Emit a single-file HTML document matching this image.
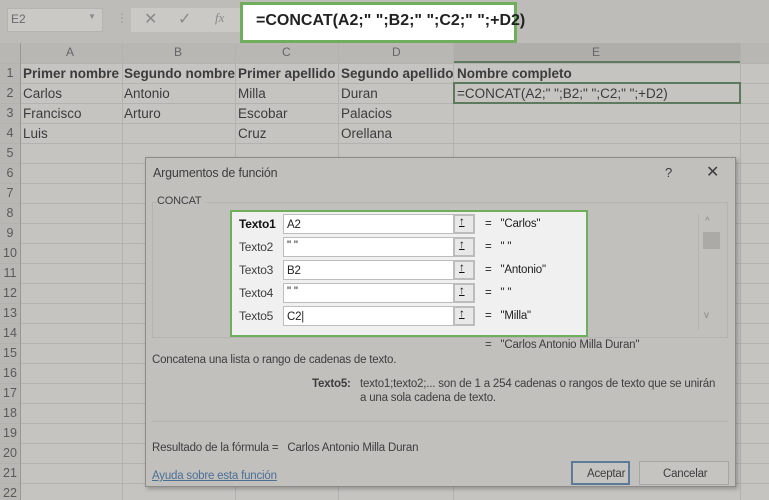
<!DOCTYPE html>
<html><head><meta charset="utf-8"><style>
*{margin:0;padding:0;box-sizing:border-box}
body{width:769px;height:500px;overflow:hidden;background:#c6c4c1;font-family:"Liberation Sans",sans-serif;color:#3c3c3c;position:relative}
.a{position:absolute}
.top{left:0;top:0;width:769px;height:43px;background:#bebcb9}
.grid{left:0;top:43px;width:769px;height:457px}
.hl{position:absolute;left:0;width:769px;height:1px;background:#b4b2af}
.vl{position:absolute;top:0;width:1px;height:457px;background:#b4b2af}
.t{position:absolute;font-size:13.5px;white-space:nowrap}
.rh{position:absolute;left:0;width:20px;text-align:center;font-size:12.5px;color:#5a5a5a}
.dlg{left:145px;top:157px;width:591px;height:330px;background:#c2c0bd;border:1px solid #8e8c89;box-shadow:2px 2px 4px rgba(0,0,0,.25)}
.dt{font-size:11.5px;color:#3e3e3e;position:absolute;white-space:nowrap;letter-spacing:-0.2px}
</style></head><body>
<div class="a top">
 <div class="a" style="left:7px;top:8px;width:96px;height:24px;background:#cbc9c6;border:1px solid #b6b4b1"></div>
 <div class="t" style="left:11px;top:12px;color:#6b6b6b;font-size:12px">E2</div>
 <div class="t" style="left:88px;top:12px;color:#8a8a8a;font-size:8px">▼</div>
 <div class="t" style="left:116px;top:11px;color:#9a9a9a;font-size:12px">⋮</div>
 <div class="a" style="left:131px;top:8px;width:112px;height:24px;background:#cbc9c6"></div>
 <div class="t" style="left:144px;top:9px;color:#8a8a8a;font-size:16px">✕</div>
 <div class="t" style="left:178px;top:9px;color:#8a8a8a;font-size:16px">✓</div>
 <div class="t" style="left:215px;top:10px;color:#8a8a8a;font-size:13px;font-style:italic;font-family:'Liberation Serif',serif">fx</div>
 <div class="a" style="left:240px;top:2px;width:277px;height:41px;background:#fff;border:3px solid #6fae5c"></div>
 <div class="t" style="left:256px;top:12px;font-size:16px;font-weight:bold;color:#222">=CONCAT(A2;" ";B2;" ";C2;" ";+D2)</div>
</div>
<div class="a grid">
 <div class="a" style="left:0;top:0;width:769px;height:20px;background:#b9b7b4"></div>
 <div class="a" style="left:0;top:0;width:20px;height:457px;background:#b9b7b4"></div>
 <div class="a" style="left:453px;top:0;width:287px;height:20px;background:#b0aeab;border-bottom:2px solid #5e7a5e"></div>
 <div class="hl" style="top:20px"></div><div class="hl" style="top:40px"></div><div class="hl" style="top:60px"></div><div class="hl" style="top:80px"></div><div class="hl" style="top:100px"></div><div class="hl" style="top:120px"></div><div class="hl" style="top:140px"></div><div class="hl" style="top:160px"></div><div class="hl" style="top:180px"></div><div class="hl" style="top:200px"></div><div class="hl" style="top:220px"></div><div class="hl" style="top:240px"></div><div class="hl" style="top:260px"></div><div class="hl" style="top:280px"></div><div class="hl" style="top:300px"></div><div class="hl" style="top:320px"></div><div class="hl" style="top:340px"></div><div class="hl" style="top:360px"></div><div class="hl" style="top:380px"></div><div class="hl" style="top:400px"></div><div class="hl" style="top:420px"></div><div class="hl" style="top:440px"></div>
 <div class="vl" style="left:20px;background:#9a9895"></div><div class="vl" style="left:122px"></div><div class="vl" style="left:235px"></div><div class="vl" style="left:338px"></div><div class="vl" style="left:453px"></div><div class="vl" style="left:740px"></div>
 <div class="t" style="left:66px;top:2px;color:#666;font-size:12px">A</div>
 <div class="t" style="left:174px;top:2px;color:#666;font-size:12px">B</div>
 <div class="t" style="left:282px;top:2px;color:#666;font-size:12px">C</div>
 <div class="t" style="left:392px;top:2px;color:#666;font-size:12px">D</div>
 <div class="t" style="left:592px;top:2px;color:#666;font-size:12px">E</div>
</div>
<div class="rh" style="top:66px">1</div><div class="rh" style="top:86px">2</div><div class="rh" style="top:106px">3</div><div class="rh" style="top:126px">4</div><div class="rh" style="top:146px">5</div><div class="rh" style="top:166px">6</div><div class="rh" style="top:186px">7</div><div class="rh" style="top:206px">8</div><div class="rh" style="top:226px">9</div><div class="rh" style="top:246px">10</div><div class="rh" style="top:266px">11</div><div class="rh" style="top:286px">12</div><div class="rh" style="top:306px">13</div><div class="rh" style="top:326px">14</div><div class="rh" style="top:346px">15</div><div class="rh" style="top:366px">16</div><div class="rh" style="top:386px">17</div><div class="rh" style="top:406px">18</div><div class="rh" style="top:426px">19</div><div class="rh" style="top:446px">20</div><div class="rh" style="top:466px">21</div><div class="rh" style="top:486px">22</div>
<div class="t" style="left:23px;top:66px;font-weight:bold">Primer nombre</div>
<div class="t" style="left:124px;top:66px;font-weight:bold">Segundo nombre</div>
<div class="t" style="left:238px;top:66px;font-weight:bold">Primer apellido</div>
<div class="t" style="left:341px;top:66px;font-weight:bold">Segundo apellido</div>
<div class="t" style="left:457px;top:66px;font-weight:bold">Nombre completo</div>
<div class="t" style="left:23px;top:86px">Carlos</div><div class="t" style="left:124px;top:86px">Antonio</div><div class="t" style="left:238px;top:86px">Milla</div><div class="t" style="left:341px;top:86px">Duran</div>
<div class="a" style="left:453px;top:82px;width:288px;height:22px;border:2px solid #5e7a5e"></div>
<div class="t" style="left:457px;top:86px">=CONCAT(A2;" ";B2;" ";C2;" ";+D2)</div>
<div class="t" style="left:23px;top:106px">Francisco</div><div class="t" style="left:124px;top:106px">Arturo</div><div class="t" style="left:238px;top:106px">Escobar</div><div class="t" style="left:341px;top:106px">Palacios</div>
<div class="t" style="left:23px;top:126px">Luis</div><div class="t" style="left:238px;top:126px">Cruz</div><div class="t" style="left:341px;top:126px">Orellana</div>

<div class="a dlg">
 <div class="dt" style="left:7px;top:8px;font-size:12.5px">Argumentos de función</div>
 <div class="dt" style="left:519px;top:7px;font-size:13px">?</div>
 <div class="dt" style="left:560px;top:4px;font-size:16px">✕</div>
 <div class="a" style="left:6px;top:44px;width:576px;height:136px;border:1px solid #b6b4b1"></div>
 <div class="dt" style="left:11px;top:37px;font-size:11px;background:#c2c0bd;padding-right:4px">CONCAT</div>
 <div class="a" style="left:552px;top:56px;width:22px;height:116px;border-left:1px solid #b6b4b1"></div>
 <div class="dt" style="left:559px;top:58px;font-size:10px;color:#888">^</div>
 <div class="a" style="left:557px;top:74px;width:17px;height:17px;background:#acaaa7"></div>
 <div class="dt" style="left:558px;top:152px;font-size:10px;color:#888">v</div>
 <div class="dt" style="left:339px;top:181px">=&nbsp;&nbsp;&nbsp;"Carlos Antonio Milla Duran"</div>
 <div class="dt" style="left:6px;top:196px">Concatena una lista o rango de cadenas de texto.</div>
 <div class="dt" style="left:166px;top:220px;font-weight:bold">Texto5:</div>
 <div class="dt" style="left:214px;top:220px">texto1;texto2;... son de 1 a 254 cadenas o rangos de texto que se unirán</div>
 <div class="dt" style="left:214px;top:234px">a una sola cadena de texto.</div>
 <div class="a" style="left:6px;top:263px;width:576px;height:1px;background:#b6b4b1"></div>
 <div class="dt" style="left:6px;top:284px">Resultado de la fórmula =&nbsp;&nbsp;&nbsp;Carlos Antonio Milla Duran</div>
 <div class="dt" style="left:6px;top:312px;color:#4a6f96;text-decoration:underline">Ayuda sobre esta función</div>
 <div class="a" style="left:425px;top:303px;width:59px;height:24px;border:2px solid #5d7a99;background:#c6c4c1"></div>
 <div class="dt" style="left:441px;top:310px">Aceptar</div>
 <div class="a" style="left:493px;top:303px;width:90px;height:24px;border:1px solid #a8a6a3;background:#c6c4c1"></div>
 <div class="dt" style="left:517px;top:310px">Cancelar</div>
</div>

<div class="a" style="left:230px;top:210px;width:358px;height:127px;background:#f0f0f0;border:2px solid #6fae5c"></div>
<div style="position:absolute;left:0;top:0;font-size:12px;color:#222">
 <div class="dt" style="left:239px;top:217px;font-weight:bold;color:#111;font-size:12px">Texto1</div>
 <div class="dt" style="left:239px;top:240px;font-size:12px">Texto2</div>
 <div class="dt" style="left:239px;top:263px;font-size:12px">Texto3</div>
 <div class="dt" style="left:239px;top:286px;font-size:12px">Texto4</div>
 <div class="dt" style="left:239px;top:309px;font-size:12px">Texto5</div>
 <div class="a" style="left:283px;top:214px;width:171px;height:20px;background:#fff;border:1px solid #bdbdbd"></div>
 <div class="a" style="left:283px;top:237px;width:171px;height:20px;background:#fff;border:1px solid #bdbdbd"></div>
 <div class="a" style="left:283px;top:260px;width:171px;height:20px;background:#fff;border:1px solid #bdbdbd"></div>
 <div class="a" style="left:283px;top:283px;width:171px;height:20px;background:#fff;border:1px solid #bdbdbd"></div>
 <div class="a" style="left:283px;top:306px;width:171px;height:20px;background:#fff;border:1px solid #bdbdbd"></div>
 <div class="a" style="left:453px;top:214px;width:22px;height:20px;background:#e8e8e8;border:2px solid #bcbcbc"></div>
 <div class="a" style="left:453px;top:237px;width:22px;height:20px;background:#e8e8e8;border:2px solid #bcbcbc"></div>
 <div class="a" style="left:453px;top:260px;width:22px;height:20px;background:#e8e8e8;border:2px solid #bcbcbc"></div>
 <div class="a" style="left:453px;top:283px;width:22px;height:20px;background:#e8e8e8;border:2px solid #bcbcbc"></div>
 <div class="a" style="left:453px;top:306px;width:22px;height:20px;background:#e8e8e8;border:2px solid #bcbcbc"></div>
 <div class="dt" style="left:459px;top:216px;font-weight:bold;color:#111;text-decoration:underline">↑</div>
 <div class="dt" style="left:459px;top:239px;font-weight:bold;color:#111;text-decoration:underline">↑</div>
 <div class="dt" style="left:459px;top:262px;font-weight:bold;color:#111;text-decoration:underline">↑</div>
 <div class="dt" style="left:459px;top:285px;font-weight:bold;color:#111;text-decoration:underline">↑</div>
 <div class="dt" style="left:459px;top:308px;font-weight:bold;color:#111;text-decoration:underline">↑</div>
 <div class="dt" style="left:287px;top:219px;color:#222;font-size:11.5px">A2</div>
 <div class="dt" style="left:287px;top:240px;color:#222;font-size:11.5px">" "</div>
 <div class="dt" style="left:287px;top:265px;color:#222;font-size:11.5px">B2</div>
 <div class="dt" style="left:287px;top:286px;color:#222;font-size:11.5px">" "</div>
 <div class="dt" style="left:287px;top:311px;color:#222;font-size:11.5px">C2|</div>
 <div class="dt" style="left:485px;top:218px;color:#222">=&nbsp;&nbsp;&nbsp;"Carlos"</div>
 <div class="dt" style="left:485px;top:241px;color:#222">=&nbsp;&nbsp;&nbsp;" "</div>
 <div class="dt" style="left:485px;top:264px;color:#222">=&nbsp;&nbsp;&nbsp;"Antonio"</div>
 <div class="dt" style="left:485px;top:287px;color:#222">=&nbsp;&nbsp;&nbsp;" "</div>
 <div class="dt" style="left:485px;top:310px;color:#222">=&nbsp;&nbsp;&nbsp;"Milla"</div>
</div>
</body></html>
